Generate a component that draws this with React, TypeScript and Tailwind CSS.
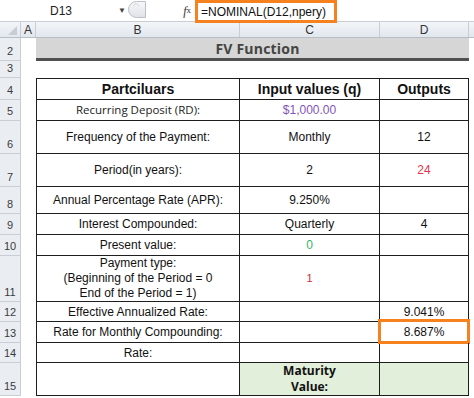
import React from "react";

const rowHead = "w-[21px] shrink-0 bg-[#eaeef3] border-r border-b border-[#c9ced6] text-[11px] text-[#3b3b3b] flex items-end justify-center pb-[1px]";
const cellB = "w-[204px] shrink-0 border-l border-r border-b border-[#1e1e1e] flex items-center justify-center text-center text-[12px] text-[#111]";
const cellC = "w-[140px] shrink-0 border-r border-b border-[#1e1e1e] flex items-center justify-center text-center text-[12px] text-[#111]";
const cellD = "w-[89px] shrink-0 border-r border-b border-[#1e1e1e] flex items-center justify-center text-center text-[12px] text-[#111]";

type Row = {
  n: number;
  h: string;
  b: React.ReactNode;
  c?: React.ReactNode;
  d?: React.ReactNode;
};

const rows: Row[] = [
  { n: 5, h: "h-[21px]", b: <span className="text-[11.5px] text-[#222] font-['Open_Sans',sans-serif]">Recurring Deposit (RD):</span>, c: <span className="text-[#8454b8] text-[12px]">$1,000.00</span> },
  { n: 6, h: "h-[33px]", b: "Frequency of the Payment:", c: "Monthly", d: "12" },
  { n: 7, h: "h-[33px]", b: "Period(in years):", c: "2", d: <span className="text-[#e3324a]">24</span> },
  { n: 8, h: "h-[27px]", b: "Annual Percentage Rate (APR):", c: "9.250%" },
  { n: 9, h: "h-[21px]", b: "Interest Compounded:", c: "Quarterly", d: "4" },
  { n: 10, h: "h-[21px]", b: "Present value:", c: <span className="text-[#33b36b]">0</span> },
  {
    n: 11,
    h: "h-[46px]",
    b: (
      <span className="leading-[15px]">
        Payment type:
        <br />
        (Beginning of the Period = 0
        <br />
        End of the Period = 1)
      </span>
    ),
    c: <span className="text-[#d0283e] text-[11px]">1</span>,
  },
  { n: 12, h: "h-[20px]", b: "Effective Annualized Rate:", d: "9.041%" },
  { n: 13, h: "h-[21px]", b: "Rate for Monthly Compounding:", d: "8.687%" },
  { n: 14, h: "h-[20px]", b: "Rate:" },
];

export default function App() {
  return (
    <div className="w-[474px] h-[398px] overflow-hidden bg-white font-['Liberation_Sans',Arial,sans-serif] text-[#111]">
      {/* formula bar */}
      <div className="flex h-[22px] border-b border-[#c9ced6] bg-white relative">
        <div className="w-[118px] shrink-0 flex items-center justify-center text-[12px] text-[#222] pl-[4px]">D13</div>
        <div className="w-[10px] shrink-0 flex items-center text-[8px] text-[#444]">▼</div>
        <div className="w-[18px] h-[17px] mt-[1px] rounded-l-full border border-[#b9c0c9] bg-gradient-to-b from-[#f6f7f9] to-[#dfe3e8] flex items-start pl-[4px]">
          <span className="text-[7px] text-[#aaa] leading-[8px]">◠</span>
        </div>
        <div className="w-[49px] shrink-0 flex items-center justify-end pr-[4px] text-[12px] italic font-['Liberation_Serif',serif] text-[#333]">
          f<span className="text-[9px] not-italic">x</span>
        </div>
        <div className="w-[142px] h-[23px] shrink-0 border-[3px] border-[#f5821f] bg-white flex items-center pl-[3px] text-[12px] text-[#111] z-10">
          =NOMINAL(D12,npery)
        </div>
        <div className="flex-1" />
      </div>

      {/* column headers */}
      <div className="flex h-[16px] bg-gradient-to-b from-[#f3f5f8] to-[#e2e7ee] border-b border-[#b8bec7] text-[12px] text-[#333]">
        <div className="w-[21px] shrink-0 border-r border-[#c9ced6] relative">
          <div className="absolute right-[3px] bottom-[2px] w-0 h-0 border-l-[9px] border-l-transparent border-b-[9px] border-b-[#c8cdd4]" />
        </div>
        <div className="w-[15px] shrink-0 border-r border-[#c9ced6] flex items-center justify-center">A</div>
        <div className="w-[204px] shrink-0 border-r border-[#c9ced6] flex items-center justify-center">B</div>
        <div className="w-[140px] shrink-0 border-r border-[#c9ced6] flex items-center justify-center">C</div>
        <div className="w-[89px] shrink-0 border-r border-[#c9ced6] flex items-center justify-center">D</div>
        <div className="flex-1" />
      </div>

      {/* row 2 */}
      <div className="flex h-[23px]">
        <div className={rowHead}>2</div>
        <div className="w-[15px] shrink-0" />
        <div className="w-[433px] shrink-0 bg-[#d6d6d6] border-b-[3px] border-[#505050] flex items-center justify-center pl-[10px] text-[14px] font-bold text-[#444] font-['Open_Sans',sans-serif] tracking-[0.2px]">
          FV Function
        </div>
        <div className="flex-1" />
      </div>

      {/* row 3 */}
      <div className="flex h-[17px]">
        <div className={rowHead}>3</div>
        <div className="flex-1" />
      </div>

      {/* row 4 */}
      <div className="flex h-[22px]">
        <div className={rowHead}>4</div>
        <div className="w-[15px] shrink-0" />
        <div className={`${cellB} border-t font-bold text-[14px]`}>Partciluars</div>
        <div className={`${cellC} border-t font-bold text-[14px]`}>Input values (q)</div>
        <div className={`${cellD} border-t font-bold text-[14px]`}>Outputs</div>
        <div className="flex-1" />
      </div>

      {rows.map((r) => (
        <div key={r.n} className={`flex ${r.h}`}>
          <div className={rowHead}>{r.n}</div>
          <div className="w-[15px] shrink-0" />
          <div className={cellB}>{r.b}</div>
          <div className={cellC}>{r.c}</div>
          <div className={`${cellD} relative`}>
            {r.n === 13 && (
              <div className="absolute left-[-2px] top-[-3px] w-[92px] h-[25px] border-[3px] border-[#f5821f]" />
            )}
            {r.d}
          </div>
          <div className="flex-1" />
        </div>
      ))}

      {/* row 15 */}
      <div className="flex h-[33px]">
        <div className={rowHead}>15</div>
        <div className="w-[15px] shrink-0" />
        <div className={cellB} />
        <div className={`${cellC} bg-[#e2efda] font-bold text-[12px] font-['Open_Sans',sans-serif] leading-[16px]`}>
          Maturity
          <br />
          Value:
        </div>
        <div className={`${cellD} bg-[#e2efda]`} />
        <div className="flex-1" />
      </div>
    </div>
  );
}
